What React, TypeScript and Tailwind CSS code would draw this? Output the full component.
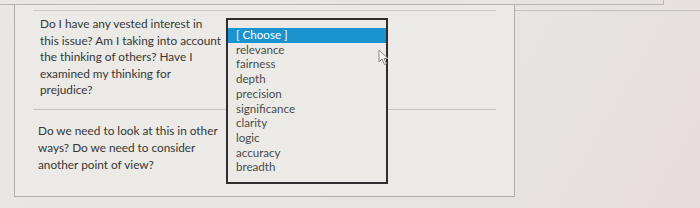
import React from 'react';

const options = [
  'relevance',
  'fairness',
  'depth',
  'precision',
  'significance',
  'clarity',
  'logic',
  'accuracy',
  'breadth',
];

function Pointer() {
  return (
    <svg width="12" height="17" viewBox="0 0 12 17" className="absolute left-[150px] top-[29px]">
      <path d="M1 1 L1 13 L4 10 L6.5 15.5 L8.5 14.5 L6 9.5 L10 9.5 Z" fill="#f4f4f2" stroke="#8a8a8a" strokeWidth="1" strokeLinejoin="round" />
    </svg>
  );
}

function Listbox() {
  return (
    <div className="absolute left-[226px] top-[18px] h-[166px] w-[162px] border-2 border-[#2e2e2e] bg-[#ebeae6] pt-[8px] text-[11.6px] leading-[14.7px] text-[#4a4a4a]">
      <div className="bg-[#1b93cf] pl-[8px] text-white">[ Choose ]</div>
      {options.map((o) => (
        <div key={o} className="pl-[8px]">
          {o}
        </div>
      ))}
      <Pointer />
    </div>
  );
}

export default function App() {
  return (
    <div
      className="relative h-[208px] w-[700px] overflow-hidden bg-[linear-gradient(120deg,#e8e7e3_0%,#e7e5e1_65%,#e6dddc_100%)] font-['Lato','Open_Sans',sans-serif]"
    >
      <div className="h-[5px] w-[664px] border-b border-r border-[#b9b7b3]" />
      <div className="flex">
        <div className="ml-[14px] h-[192px] w-[501px] border-x border-b border-[#aeaca8] bg-[#ebeae6]">
          <div className="mx-[18px] mt-[5px] h-[99px] border-t border-[#cfcdc9] pl-[7px] pt-[5px] text-[11.8px] leading-[16.6px] text-[#363636]">
            <p className="whitespace-nowrap">
              Do I have any vested interest in
              <br />
              this issue? Am I taking into account
              <br />
              the thinking of others? Have I
              <br />
              examined my thinking for
              <br />
              prejudice?
            </p>
          </div>
          <div className="mx-[18px] border-t border-[#c6c4c0] pl-[5px] pt-[12px] text-[11.8px] leading-[17px] text-[#363636]">
            <p className="whitespace-nowrap">
              Do we need to look at this in other
              <br />
              ways? Do we need to consider
              <br />
              another point of view?
            </p>
          </div>
        </div>
        <div className="mt-[5px] flex-1 border-t border-[#c3c1bd]" />
      </div>
      <Listbox />
    </div>
  );
}
